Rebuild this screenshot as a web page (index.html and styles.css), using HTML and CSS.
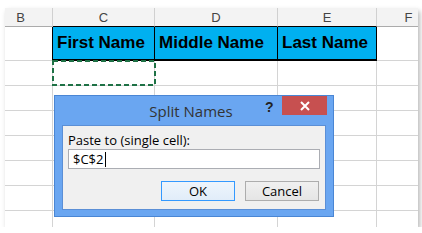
FILE: index.html
```html
<!DOCTYPE html>
<html lang="en">
<head>
  <meta charset="UTF-8" />
  <title>Split Names</title>
  <link rel="stylesheet" href="styles.css">
</head>
<body>

  <div class="sheet">
    <div class="grid">
      <div class="col-head first">B</div>
      <div class="col-head top-blue">C</div>
      <div class="col-head top-blue">D</div>
      <div class="col-head top-blue">E</div>
      <div class="col-head">F</div>

      <div class="cell left-blue"></div>
      <div class="cell blue">First Name</div>
      <div class="cell blue">Middle Name</div>
      <div class="cell blue">Last Name</div>
      <div class="cell"></div>

      <div class="cell"></div>
      <div class="cell copy">
        <svg class="ants" width="104" height="26" viewBox="0 0 104 26">
          <rect x="1" y="1" width="102" height="24" fill="none" stroke="#1e7145" stroke-width="2" stroke-dasharray="5 3"/>
        </svg>
      </div>
      <div class="cell"></div>
      <div class="cell"></div>
      <div class="cell"></div>

      <div class="cell"></div><div class="cell"></div><div class="cell"></div><div class="cell"></div><div class="cell"></div>
      <div class="cell"></div><div class="cell"></div><div class="cell"></div><div class="cell"></div><div class="cell"></div>
      <div class="cell"></div><div class="cell"></div><div class="cell"></div><div class="cell"></div><div class="cell"></div>
      <div class="cell"></div><div class="cell"></div><div class="cell"></div><div class="cell"></div><div class="cell"></div>
      <div class="cell"></div><div class="cell"></div><div class="cell"></div><div class="cell"></div><div class="cell"></div>
      <div class="cell"></div><div class="cell"></div><div class="cell"></div><div class="cell"></div><div class="cell"></div>
    </div>

    <div class="dialog">
      <div class="title-bar">
        <span class="title">Split Names</span>
        <span class="help">?</span>
        <span class="close">
          <svg width="12" height="10" viewBox="0 0 12 10">
            <path d="M2 1 L10 9 M10 1 L2 9" stroke="#fff" stroke-width="2"/>
          </svg>
        </span>
      </div>
      <div class="panel">
        <div class="label">Paste to (single cell):</div>
        <div class="input">$C$2<span class="caret"></span></div>
        <div class="buttons">
          <button class="btn focused">OK</button>
          <button class="btn">Cancel</button>
        </div>
      </div>
    </div>
  </div>

</body>
</html>
```

FILE: styles.css
```css
html, body {
  margin: 0;
  padding: 0;
  background: #ffffff;
}

/* 1. Sheet frame */
.sheet {
  position: relative;
  margin: 8px 0 0 5px;
  width: 413px;
  height: 219px;
  overflow: hidden;
  box-shadow: 2px 3px 5px rgba(0,0,0,0.28);
  background: #fff;
}
.grid {
  display: grid;
  grid-template-columns: 48px 102px 123px 99px 64px;
  grid-template-rows: 19px 34px repeat(7, 25px);
  width: 436px;
}
.col-head, .cell {
  box-sizing: border-box;
  border-right: 1px solid #d4d4d4;
  border-bottom: 1px solid #d4d4d4;
}
.col-head {
  background: #f3f3f3;
  border-right-color: #d0d0d0;
  border-bottom-color: #ababab;
  display: flex;
  align-items: center;
  justify-content: center;
  font-family: "Liberation Sans", Arial, sans-serif;
  font-size: 13px;
  color: #444;
}
.col-head.first { padding-right: 16px; }
.col-head.top-blue { border-bottom-color: #000; }

.cell.left-blue { border-right-color: #000; }
.cell.blue {
  background: #00b0f0;
  border-right-color: #000;
  border-bottom: 2px solid #000;
  display: flex;
  align-items: center;
  padding-left: 4px;
  font-family: "Liberation Sans", Arial, sans-serif;
  font-weight: bold;
  font-size: 17px;
  color: #000;
  white-space: nowrap;
}
.cell.copy { position: relative; }
.cell.copy .ants {
  position: absolute;
  top: -1px;
  left: -1px;
}

/* 2. Dialog */
.dialog {
  position: absolute;
  left: 49px;
  top: 87px;
  width: 280px;
  height: 122px;
  box-sizing: border-box;
  background: #6aa6f1;
  border: 1px solid #4a86d4;
  display: flex;
  flex-direction: column;
  font-family: "Open Sans", "Noto Sans", sans-serif;
}
.title-bar {
  position: relative;
  height: 29px;
  display: flex;
  align-items: center;
  justify-content: center;
}
.title {
  font-size: 15px;
  color: #333;
  margin-left: -6px;
}
.help {
  position: absolute;
  left: 210px;
  top: 3px;
  font-family: "Liberation Sans", Arial, sans-serif;
  font-weight: bold;
  font-size: 14px;
  color: #222;
}
.close {
  position: absolute;
  right: 6px;
  top: 0;
  width: 45px;
  height: 19px;
  background: #c75050;
  display: flex;
  align-items: center;
  justify-content: center;
}
.panel {
  flex: 1;
  margin: 0 7px 6px 7px;
  background: #f0f0f0;
  border: 1px solid #5b8fd6;
  padding: 5px 5px 0 5px;
  display: flex;
  flex-direction: column;
}
.label {
  font-size: 13px;
  line-height: 18px;
  color: #000;
}
.input {
  height: 20px;
  box-sizing: border-box;
  border: 1px solid #abadb3;
  background: #fff;
  font-size: 13px;
  line-height: 18px;
  padding-left: 4px;
  color: #000;
  display: flex;
  align-items: center;
}
.caret {
  display: inline-block;
  width: 1px;
  height: 15px;
  background: #000;
  margin-left: 1px;
}
.buttons {
  display: flex;
  justify-content: flex-end;
  gap: 10px;
  margin-top: 12px;
  padding-right: 1px;
}
.btn {
  width: 74px;
  height: 20px;
  padding: 0;
  box-sizing: border-box;
  border: 1px solid #adadad;
  background: linear-gradient(#f0f0f0, #e5e5e5);
  font-family: "Open Sans", "Noto Sans", sans-serif;
  font-size: 13px;
  line-height: 18px;
  color: #000;
}
.btn.focused { border-color: #3399ff; background: linear-gradient(#eef5fc, #e1edf9); }
```
